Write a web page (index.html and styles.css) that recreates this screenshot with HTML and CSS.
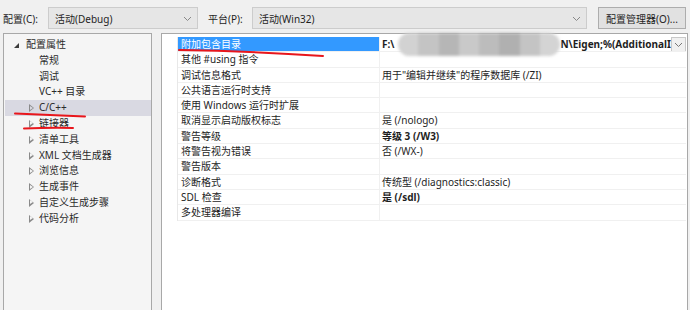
FILE: index.html
```html
<!DOCTYPE html>
<html lang="zh-CN">
<head>
    <meta charset="UTF-8">
    <title>属性页</title>
    <link rel="stylesheet" href="styles.css">
</head>
<body>
    <div class="page">
        <div class="toolbar">
            <span class="label label-config">配置(C):</span>
            <div class="combo combo-config">
                <span>活动(Debug)</span>
                <svg class="chev" width="9" height="6" viewBox="0 0 9 6"><path d="M1 1 L4.5 4.5 L8 1" fill="none" stroke="#888" stroke-width="1"/></svg>
            </div>
            <span class="label label-platform">平台(P):</span>
            <div class="combo combo-platform">
                <span>活动(Win32)</span>
                <svg class="chev" width="9" height="6" viewBox="0 0 9 6"><path d="M1 1 L4.5 4.5 L8 1" fill="none" stroke="#888" stroke-width="1"/></svg>
            </div>
            <button class="btn">配置管理器(O)...</button>
        </div>

        <div class="main">
            <div class="tree">
                <div class="node root"><span class="arrow-open"></span>配置属性</div>
                <div class="node leaf">常规</div>
                <div class="node leaf">调试</div>
                <div class="node leaf">VC++ 目录</div>
                <div class="node child selected"><span class="arrow"></span>C/C++</div>
                <div class="node child"><span class="arrow"></span>链接器</div>
                <div class="node child"><span class="arrow"></span>清单工具</div>
                <div class="node child"><span class="arrow"></span>XML 文档生成器</div>
                <div class="node child"><span class="arrow"></span>浏览信息</div>
                <div class="node child"><span class="arrow"></span>生成事件</div>
                <div class="node child"><span class="arrow"></span>自定义生成步骤</div>
                <div class="node child"><span class="arrow"></span>代码分析</div>
            </div>

            <div class="props">
                <div class="grid">
                    <div class="row active">
                        <div class="name">附加包含目录</div>
                        <div class="value strong">
                            <span>F:\</span>
                            <span class="tail">N\Eigen;%(AdditionalI</span>
                            <span class="drop">
                                <svg width="9" height="6" viewBox="0 0 9 6"><path d="M1 1 L4.5 4.5 L8 1" fill="none" stroke="#777" stroke-width="1"/></svg>
                            </span>
                        </div>
                    </div>
                    <div class="row"><div class="name">其他 #using 指令</div><div class="value"></div></div>
                    <div class="row"><div class="name">调试信息格式</div><div class="value">用于"编辑并继续"的程序数据库 (/ZI)</div></div>
                    <div class="row"><div class="name">公共语言运行时支持</div><div class="value"></div></div>
                    <div class="row"><div class="name">使用 Windows 运行时扩展</div><div class="value"></div></div>
                    <div class="row"><div class="name">取消显示启动版权标志</div><div class="value">是 (/nologo)</div></div>
                    <div class="row"><div class="name">警告等级</div><div class="value strong">等级 3 (/W3)</div></div>
                    <div class="row"><div class="name">将警告视为错误</div><div class="value">否 (/WX-)</div></div>
                    <div class="row"><div class="name">警告版本</div><div class="value"></div></div>
                    <div class="row"><div class="name">诊断格式</div><div class="value">传统型 (/diagnostics:classic)</div></div>
                    <div class="row"><div class="name">SDL 检查</div><div class="value strong">是 (/sdl)</div></div>
                    <div class="row"><div class="name">多处理器编译</div><div class="value"></div></div>
                </div>
            </div>
        </div>

        <!-- 打码区域 -->
        <div class="mosaic">
            <span style="background:#d2d2d2"></span>
            <span style="background:#c4c4c4"></span>
            <span style="background:#b6b6b6"></span>
            <span style="background:#c9c9c9"></span>
            <span style="background:#bcbcbc"></span>
            <span style="background:#b0b0b0"></span>
            <span style="background:#c4c4c4"></span>
            <span style="background:#d4d4d4"></span>
        </div>

        <!-- 红色标注线 -->
        <svg class="marks" width="690" height="310" viewBox="0 0 690 310">
            <path d="M179 50 Q 250 51 323 56" fill="none" stroke="#e8161c" stroke-width="2" stroke-linecap="round"/>
            <path d="M15 113.5 Q 50 115 85 116.5" fill="none" stroke="#e8161c" stroke-width="2" stroke-linecap="round"/>
            <path d="M24 128.5 Q 50 127.5 73 128" fill="none" stroke="#e8161c" stroke-width="2" stroke-linecap="round"/>
        </svg>
    </div>
</body>
</html>
```

FILE: styles.css
```css
* {
    margin: 0;
    padding: 0;
    box-sizing: border-box;
}

body {
    background: #f0f0f0;
    font-family: "Noto Sans", "Noto Sans CJK SC", sans-serif;
    font-size: 10px;
    color: #1e1e1e;
}

.page {
    position: relative;
    width: 690px;
    height: 310px;
    overflow: hidden;
}

.toolbar {
    display: flex;
    align-items: center;
    height: 33px;
    padding-left: 3px;
    padding-top: 3px;
}

.label-config {
    width: 45px;
}

.label-platform {
    width: 44px;
    margin-left: 10px;
}

.combo {
    display: flex;
    align-items: center;
    justify-content: space-between;
    height: 22px;
    padding: 0 5px 0 6px;
    background: #e6e6e6;
    border: 1px solid #cccccc;
}

.combo-config {
    width: 150px;
}

.combo-platform {
    width: 335px;
}

.chev {
    margin-top: 1px;
}

.btn {
    margin-left: 11px;
    width: 88px;
    height: 22px;
    background: #e1e1e1;
    border: 1px solid #adadad;
    font-family: inherit;
    font-size: 10px;
    color: #1e1e1e;
}

.main {
    display: flex;
    height: 277px;
}

.tree {
    margin-left: 3px;
    width: 149px;
    height: 290px;
    background: #f5f5f5;
    border: 1px solid #a8a8a8;
    padding-top: 3px;
    color: #2a2a2a;
}

.node {
    position: relative;
    height: 15.8px;
    line-height: 15.8px;
    white-space: nowrap;
}

.root {
    padding-left: 22px;
}

.leaf {
    padding-left: 35px;
}

.child {
    padding-left: 35px;
}

.selected {
    margin-left: 1px;
    padding-left: 34px;
    background: #d9d9e2;
}

.arrow-open {
    position: absolute;
    left: 10px;
    top: 6px;
    width: 0;
    height: 0;
    border-left: 5px solid transparent;
    border-bottom: 5px solid #3c3c3c;
}

.arrow {
    position: absolute;
    left: 25px;
    top: 4px;
    width: 0;
    height: 0;
    border-top: 4px solid transparent;
    border-bottom: 4px solid transparent;
    border-left: 5px solid #8a8a8a;
}

.arrow::after {
    content: "";
    position: absolute;
    left: -4px;
    top: -2.5px;
    border-top: 2.5px solid transparent;
    border-bottom: 2.5px solid transparent;
    border-left: 3px solid #f5f5f5;
}

.selected .arrow {
    left: 24px;
}

.selected .arrow::after {
    border-left-color: #d9d9e2;
}

.props {
    margin-left: 9px;
    width: 527px;
    height: 290px;
    background: #ffffff;
    border: 1px solid #a8a8a8;
    padding: 3px 1px 0 15px;
}

.grid {
    border-left: 1px solid #e8e8e8;
}

.row {
    display: grid;
    grid-template-columns: 202px 1fr;
    height: 15.3px;
    line-height: 14.3px;
    border-bottom: 1px solid #f0f0f0;
}

.name {
    padding-left: 3px;
    border-right: 1px solid #f0f0f0;
    white-space: nowrap;
}

.value {
    position: relative;
    padding-left: 2px;
    white-space: nowrap;
    overflow: hidden;
}

.strong {
    font-weight: bold;
}

.active .name {
    background: #3399ff;
    color: #ffffff;
}

.active .value {
    display: flex;
}

.tail {
    margin-left: 166px;
}

.drop {
    position: absolute;
    right: 0;
    top: 0;
    width: 15px;
    height: 15px;
    display: flex;
    align-items: center;
    justify-content: center;
    background: #f0f0f0;
    border: 1px solid #c8c8c8;
}

.mosaic {
    position: absolute;
    left: 398px;
    top: 33px;
    width: 162px;
    height: 23px;
    display: flex;
    border-radius: 12px;
    overflow: hidden;
    filter: blur(1.5px);
}

.mosaic span {
    flex: 1;
}

.marks {
    position: absolute;
    left: 0;
    top: 0;
    pointer-events: none;
}
```
